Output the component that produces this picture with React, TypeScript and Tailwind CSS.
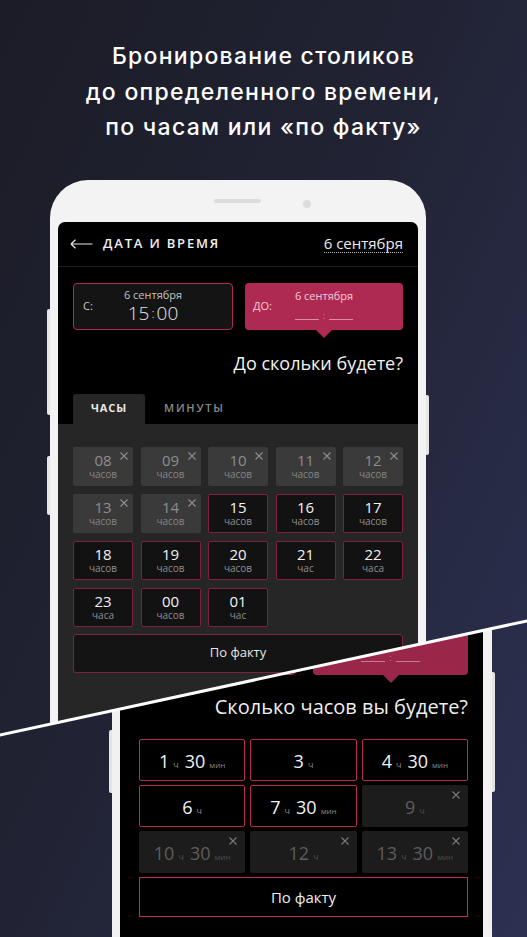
import React from "react";

const FONT = { fontFamily: '"Open Sans", "Noto Sans", sans-serif' };

function XMark({ color = "#9a9a9a", size = 8 }: { color?: string; size?: number }) {
  return (
    <svg width={size} height={size} viewBox="0 0 8 8" fill="none">
      <path d="M0.5 0.5 L7.5 7.5 M7.5 0.5 L0.5 7.5" stroke={color} strokeWidth="1.1" />
    </svg>
  );
}

type H = { n: string; u: string; d?: boolean };
const hours: H[] = [
  { n: "08", u: "часов", d: true },
  { n: "09", u: "часов", d: true },
  { n: "10", u: "часов", d: true },
  { n: "11", u: "часов", d: true },
  { n: "12", u: "часов", d: true },
  { n: "13", u: "часов", d: true },
  { n: "14", u: "часов", d: true },
  { n: "15", u: "часов" },
  { n: "16", u: "часов" },
  { n: "17", u: "часов" },
  { n: "18", u: "часов" },
  { n: "19", u: "часов" },
  { n: "20", u: "часов" },
  { n: "21", u: "час" },
  { n: "22", u: "часа" },
  { n: "23", u: "часа" },
  { n: "00", u: "часов" },
  { n: "01", u: "час" },
];

function HourCell({ h }: { h: H }) {
  if (h.d) {
    return (
      <div className="relative flex h-[39px] flex-col items-center justify-center rounded-[2px] bg-[#3a3a3a]">
        <div className="absolute right-[5px] top-[5px]">
          <XMark color="#8e8e8e" />
        </div>
        <span className="text-[15px] leading-[15px] text-[#8d8d8d]">{h.n}</span>
        <span className="mt-[1px] text-[10px] leading-[11px] text-[#858585]">{h.u}</span>
      </div>
    );
  }
  return (
    <div className="flex h-[39px] flex-col items-center justify-center rounded-[2px] border border-[#7f2242] bg-[#121212]">
      <span className="text-[15px] leading-[15px] text-[#f2f2f2]">{h.n}</span>
      <span className="mt-[1px] text-[10px] leading-[11px] text-[#8f8f8f]">{h.u}</span>
    </div>
  );
}

type D = { parts: [string, string][]; d?: boolean };
const durations: D[] = [
  { parts: [["1", "ч"], ["30", "мин"]] },
  { parts: [["3", "ч"]] },
  { parts: [["4", "ч"], ["30", "мин"]] },
  { parts: [["6", "ч"]] },
  { parts: [["7", "ч"], ["30", "мин"]] },
  { parts: [["9", "ч"]], d: true },
  { parts: [["10", "ч"], ["30", "мин"]], d: true },
  { parts: [["12", "ч"]], d: true },
  { parts: [["13", "ч"], ["30", "мин"]], d: true },
];

function DurCell({ c }: { c: D }) {
  const num = c.d ? "text-[#5d5d5d]" : "text-[#f2f2f2]";
  const unit = c.d ? "text-[#4d4d4d]" : "text-[#8a8a8a]";
  return (
    <div
      className={
        "relative flex h-[42px] items-center justify-center rounded-[2px] " +
        (c.d ? "bg-[#1c1c1c]" : "border border-[#b8284f] bg-black")
      }
    >
      {c.d && (
        <div className="absolute right-[8px] top-[6px]">
          <XMark color="#7a7a7a" size={8} />
        </div>
      )}
      <div className="flex items-baseline pt-[2px]">
        {c.parts.map(([n, u], i) => (
          <React.Fragment key={i}>
            <span className={"text-[18px] leading-none " + num + (i > 0 ? " ml-[6px]" : "")}>{n}</span>
            <span className={(u === "мин" ? "text-[8px]" : "text-[9px]") + " ml-[4px] leading-none " + unit}>{u}</span>
          </React.Fragment>
        ))}
      </div>
    </div>
  );
}

function TimeDashes({ color }: { color: string }) {
  return (
    <div className="flex items-end gap-[4px]">
      <div className="h-px w-[24px]" style={{ background: color }} />
      <span className="text-[9px] leading-[9px]" style={{ color }}>:</span>
      <div className="h-px w-[24px]" style={{ background: color }} />
    </div>
  );
}

function Phone1() {
  return (
    <div className="relative ml-[50px] mt-[34px] h-[800px] w-[376px] rounded-t-[38px] bg-[#f3f3f3] px-[8px]">
      <div className="absolute left-[-3px] top-[129px] h-[106px] w-[3px] rounded-l-[2px] bg-[#e6e6e6]" />
      <div className="absolute left-[-3px] top-[276px] h-[59px] w-[3px] rounded-l-[2px] bg-[#e6e6e6]" />
      <div className="absolute right-[-3px] top-[215px] h-[60px] w-[3px] rounded-r-[2px] bg-[#e6e6e6]" />
      <div className="relative flex h-[42px] items-center justify-center">
        <div className="ml-[-2px] h-[4px] w-[47px] rounded-full bg-[#dcdcdc]" />
        <div className="absolute left-[245px] top-[20px] h-[8px] w-[8px] rounded-full bg-[#dcdcdc]" />
      </div>
      <div className="flex h-[758px] flex-col overflow-hidden rounded-t-[7px] bg-black" style={FONT}>
        <div className="flex h-[45px] items-center justify-between border-b border-[#1e1e1e] px-[12px]">
          <div className="flex items-center gap-[10px]">
            <svg width="23" height="10" viewBox="0 0 23 10" fill="none">
              <path d="M1 5 H22.5 M1 5 L5.5 0.8 M1 5 L5.5 9.2" stroke="#e8e8e8" strokeWidth="1.2" />
            </svg>
            <span className="text-[13px] font-semibold tracking-[0.14em] text-[#f0f0f0]">ДАТА И ВРЕМЯ</span>
          </div>
          <span className="mr-[3px] border-b border-dotted border-[#bdbdbd] text-[15px] leading-[18px] text-[#ececec]">
            6 сентября
          </span>
        </div>
        <div className="px-[15px] pt-[16px]">
          <div className="flex gap-[12px]">
            <div className="relative flex h-[47px] flex-1 items-center rounded-[4px] border-[1.5px] border-[#b02a50] bg-[#141414]">
              <span className="ml-[9px] text-[11px] text-[#c9c9c9]">С:</span>
              <div className="absolute inset-0 flex flex-col items-center pt-[4px]">
                <span className="text-[11px] leading-[14px] text-[#c2c2c2]">6 сентября</span>
                <span className="text-[19px] font-light leading-[22px] text-[#e6e6e6]">
                  15<span className="mx-[2px] text-[13px] align-[2px]">:</span>00
                </span>
              </div>
            </div>
            <div className="relative flex h-[47px] flex-1 items-center rounded-[4px] bg-[#ae2a52]">
              <span className="ml-[8px] text-[11px] text-[#f3cdd8]">ДО:</span>
              <div className="absolute inset-0 flex flex-col items-center gap-[9px] pt-[6px]">
                <span className="text-[11px] leading-[13px] text-[#f3cdd8]">6 сентября</span>
                <TimeDashes color="#dc8aa3" />
              </div>
              <div className="absolute bottom-[-8px] left-1/2 ml-[-8px] h-0 w-0 border-x-[8px] border-t-[8px] border-x-transparent border-t-[#ae2a52]" />
            </div>
          </div>
          <div className="mt-[19px] text-right text-[18px] leading-[28px] text-[#f2f2f2]">До скольки будете?</div>
          <div className="mt-[17px] flex h-[30px] items-end">
            <div className="flex h-[30px] w-[72px] items-center justify-center rounded-t-[3px] bg-[#262626] text-[11px] font-bold tracking-[0.08em] text-[#e8e8e8]">
              ЧАСЫ
            </div>
            <div className="flex h-[30px] items-center pl-[19px] text-[11px] font-semibold tracking-[0.16em] text-[#8a8a8a]">
              МИНУТЫ
            </div>
          </div>
        </div>
        <div className="flex-1 bg-[#262626] px-[15px] pt-[23px]">
          <div className="grid grid-cols-5 gap-x-[7.5px] gap-y-[8px]">
            {hours.map((h) => (
              <HourCell key={h.n} h={h} />
            ))}
          </div>
          <div className="mt-[7px] flex h-[39px] items-center justify-center rounded-[3px] border border-[#7f2242] bg-[#141414] text-[13px] text-[#e6e6e6]">
            По факту
          </div>
        </div>
      </div>
    </div>
  );
}

function Phone2() {
  return (
    <div className="relative ml-[112px] h-[400px] w-[380px] bg-[#f1f1f1] pl-[8px] pr-[9px]">
      <div className="absolute left-[-3px] top-[170px] h-[63px] w-[3px] rounded-l-[2px] bg-[#e4e4e4]" />
      <div className="absolute right-[-3px] top-[112px] h-[120px] w-[3px] rounded-r-[2px] bg-[#e4e4e4]" />
      <div className="h-full bg-black pl-[19px] pr-[15px] pt-[68px]" style={FONT}>
        <div className="flex gap-[17px]">
          <div className="h-[47px] flex-1 rounded-[4px] border-[1.5px] border-[#b02a50] bg-[#141414]" />
          <div className="relative flex h-[47px] flex-1 flex-col items-center justify-end rounded-[4px] bg-[#9a2749] pb-[13px]">
            <TimeDashes color="#c77a92" />
            <div className="absolute bottom-[-8px] left-1/2 ml-[-8px] h-0 w-0 border-x-[8px] border-t-[8px] border-x-transparent border-t-[#9a2749]" />
          </div>
        </div>
        <div className="mt-[18px] text-right text-[20px] leading-[28px] text-[#eeeeee]">Сколько часов вы будете?</div>
        <div className="mt-[18px] grid grid-cols-3 gap-x-[5px] gap-y-[4px]">
          {durations.map((c, i) => (
            <DurCell key={i} c={c} />
          ))}
        </div>
        <div className="mt-[4px] flex h-[40px] items-center justify-center border border-[#c0305a] bg-black text-[15px] text-[#f0f0f0]">
          По факту
        </div>
      </div>
    </div>
  );
}

export default function App() {
  const bg = "bg-[linear-gradient(115deg,#1b1c26_0%,#212334_45%,#2c3152_100%)]";
  return (
    <div className={"relative h-[937px] w-[527px] overflow-hidden " + bg}>
      <div
        className="pt-[39px] text-center text-[23px] font-medium leading-[35.5px] tracking-[0.055em] text-white"
        style={{ fontFamily: 'Inter, "Noto Sans", sans-serif' }}
      >
        <div>Бронирование столиков</div>
        <div>до определенного времени,</div>
        <div>по часам или «по факту»</div>
      </div>
      <Phone1 />
      <div
        className={"absolute inset-0 flex flex-col pt-[560px] [clip-path:polygon(0_735px,527px_621px,527px_937px,0_937px)] " + bg}
      >
        <Phone2 />
      </div>
      <svg className="pointer-events-none absolute inset-0" width="527" height="937">
        <line x1="-2" y1="735.5" x2="529" y2="620.5" stroke="#ffffff" strokeWidth="3" />
      </svg>
    </div>
  );
}
